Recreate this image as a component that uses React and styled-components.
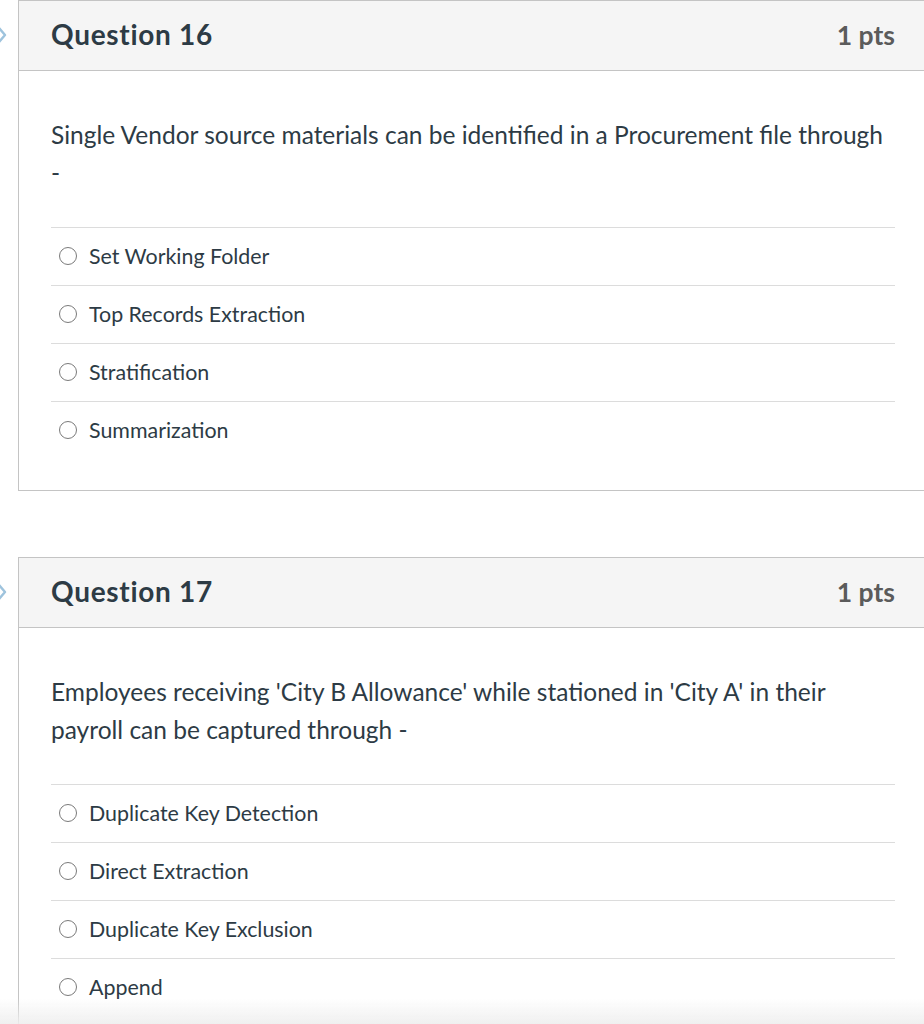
import React from "react";
import styled, { createGlobalStyle } from "styled-components";

const Global = createGlobalStyle`
  html, body { margin: 0; padding: 0; background: #fff; overflow: hidden; }
  body { font-family: Lato, "Noto Sans", sans-serif; color: #2d3b45; }
`;

const Page = styled.div`
  display: flex;
  flex-direction: column;
  gap: 66px;
  width: 924px;
`;

const QuestionRow = styled.div`
  display: flex;
  align-items: flex-start;
`;

const Gutter = styled.div`
  width: 18px;
  flex: none;
  display: flex;
  padding-top: 25px;
  overflow: hidden;
`;

const FlagSvg = styled.svg`
  margin-left: -13px;
  flex: none;
`;

const Card = styled.div`
  flex: 1;
  border-top: 1px solid #c4c4c4;
  border-bottom: 1px solid #c4c4c4;
  border-left: 1px solid #c4c4c4;
  background: #fff;
`;

const Header = styled.div`
  display: flex;
  align-items: center;
  justify-content: space-between;
  height: 69px;
  padding: 0 29px 0 32px;
  background: #f5f5f5;
  border-bottom: 1px solid #c4c4c4;
`;

const Title = styled.h2`
  margin: 0;
  margin-top: -3px;
  font-size: 28px;
  line-height: 34px;
  font-weight: 700;
  color: #2d3b45;
  letter-spacing: 0.7px;
`;

const Points = styled.div`
  margin-top: -2px;
  font-size: 26.5px;
  line-height: 32px;
  font-weight: 700;
  color: #5b5b5b;
`;

const Body = styled.div`
  padding: 45px 29px 31px 32px;
`;

const Prompt = styled.p`
  margin: 0 0 36px;
  font-size: 24.5px;
  line-height: 37.5px;
  color: #2d3b45;
  white-space: nowrap;
`;

const Answers = styled.div`
  display: flex;
  flex-direction: column;
`;

const Answer = styled.label`
  display: flex;
  align-items: center;
  gap: 12px;
  height: 57px;
  padding-left: 8px;
  padding-bottom: 2px;
  box-sizing: border-box;
  height: 58px;
  border-top: 1px solid #dcdcdc;
  font-size: 21.4px;
  line-height: 26px;
  color: #2d3b45;
`;

const Radio = styled.span`
  width: 16px;
  height: 16px;
  flex: none;
  border: 1.5px solid #7a7a7a;
  border-radius: 50%;
  background: #fff;
`;

const BottomShade = styled.div`
  position: fixed;
  left: 0;
  right: 0;
  bottom: 0;
  height: 26px;
  pointer-events: none;
  background: linear-gradient(to bottom, rgba(240, 240, 240, 0), rgba(238, 238, 238, 0.9));
`;

function Flag() {
  return (
    <FlagSvg width="20" height="20" viewBox="0 0 20 20" aria-hidden="true">
      <path
        d="M2 3 H12 L18 10 L12 17 H2 Z"
        fill="none"
        stroke="#9ec3dd"
        strokeWidth="2.4"
        strokeLinejoin="round"
      />
    </FlagSvg>
  );
}

const questions = [
  {
    num: 16,
    prompt: (
      <>
        Single Vendor source materials can be identified in a Procurement file through
        <br />-
      </>
    ),
    answers: ["Set Working Folder", "Top Records Extraction", "Stratification", "Summarization"],
  },
  {
    num: 17,
    prompt: (
      <>
        Employees receiving 'City B Allowance' while stationed in 'City A' in their
        <br />
        payroll can be captured through -
      </>
    ),
    answers: ["Duplicate Key Detection", "Direct Extraction", "Duplicate Key Exclusion", "Append"],
  },
];

export default function App() {
  return (
    <>
      <Global />
      <Page>
        {questions.map((q) => (
          <QuestionRow key={q.num}>
            <Gutter>
              <Flag />
            </Gutter>
            <Card>
              <Header>
                <Title>Question {q.num}</Title>
                <Points>1 pts</Points>
              </Header>
              <Body>
                <Prompt>{q.prompt}</Prompt>
                <Answers>
                  {q.answers.map((a) => (
                    <Answer key={a}>
                      <Radio />
                      {a}
                    </Answer>
                  ))}
                </Answers>
              </Body>
            </Card>
          </QuestionRow>
        ))}
      </Page>
      <BottomShade />
    </>
  );
}
